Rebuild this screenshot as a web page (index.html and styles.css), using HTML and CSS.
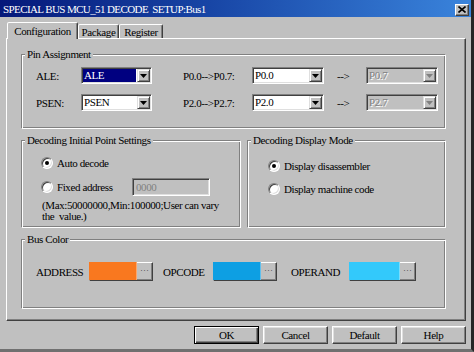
FILE: index.html
```html
<!DOCTYPE html>
<html>
<head>
<meta charset="utf-8">
<title>SPECIAL BUS MCU_51 DECODE SETUP:Bus1</title>
<link rel="stylesheet" href="styles.css">
</head>
<body>
<div class="window">
  <div class="titlebar">
    <span class="title">SPECIAL BUS MCU_51 DECODE&nbsp; SETUP:Bus1</span>
    <span class="close"><svg width="8" height="7" viewBox="0 0 8 7"><path d="M0.5 0.5 L7.5 6.5 M7.5 0.5 L0.5 6.5" stroke="#000" stroke-width="1.6" fill="none"/></svg></span>
  </div>

  <div class="tabs">
    <div class="tab active t-config">Configuration</div>
    <div class="tab t-package">Package</div>
    <div class="tab t-register">Register</div>
  </div>

  <div class="panel">
    <fieldset class="group pin">
      <legend>Pin Assignment</legend>
      <div class="pin-body">
        <span class="lbl">ALE:</span>
        <div class="combo"><span class="val sel">ALE</span><span class="drop"><svg width="7" height="4" viewBox="0 0 7 4"><polygon points="0,0 7,0 3.5,4" fill="#000"/></svg></span></div>
        <span></span>
        <span class="lbl">P0.0--&gt;P0.7:</span>
        <div class="combo"><span class="val">P0.0</span><span class="drop"><svg width="7" height="4" viewBox="0 0 7 4"><polygon points="0,0 7,0 3.5,4" fill="#000"/></svg></span></div>
        <span></span>
        <span class="lbl">--&gt;</span>
        <div class="combo disabled"><span class="val">P0.7</span><span class="drop"><svg width="7" height="4" viewBox="0 0 7 4"><polygon points="0,0 7,0 3.5,4" fill="#808080"/></svg></span></div>

        <span class="lbl">PSEN:</span>
        <div class="combo"><span class="val">PSEN</span><span class="drop"><svg width="7" height="4" viewBox="0 0 7 4"><polygon points="0,0 7,0 3.5,4" fill="#000"/></svg></span></div>
        <span></span>
        <span class="lbl">P2.0--&gt;P2.7:</span>
        <div class="combo"><span class="val">P2.0</span><span class="drop"><svg width="7" height="4" viewBox="0 0 7 4"><polygon points="0,0 7,0 3.5,4" fill="#000"/></svg></span></div>
        <span></span>
        <span class="lbl">--&gt;</span>
        <div class="combo disabled"><span class="val">P2.7</span><span class="drop"><svg width="7" height="4" viewBox="0 0 7 4"><polygon points="0,0 7,0 3.5,4" fill="#808080"/></svg></span></div>
      </div>
    </fieldset>

    <div class="row2">
      <fieldset class="group init">
        <legend>Decoding Initial Point Settings</legend>
        <div class="init-body">
          <div class="radio-row"><span class="radio on"></span><span>Auto decode</span></div>
          <div class="fixed-row">
            <div class="fixed-label"><span class="radio"></span><span>Fixed address</span></div>
            <div class="field">0000</div>
          </div>
          <div class="hint">(Max:50000000,Min:100000;User can vary<br>the&nbsp; value.)</div>
        </div>
      </fieldset>
      <fieldset class="group mode">
        <legend>Decoding Display Mode</legend>
        <div class="mode-body">
          <div class="radio-row"><span class="radio on"></span><span>Display disassembler</span></div>
          <div class="radio-row second"><span class="radio"></span><span>Display machine code</span></div>
        </div>
      </fieldset>
    </div>

    <fieldset class="group bus">
      <legend>Bus Color</legend>
      <div class="bus-body">
        <span class="blbl b-addr">ADDRESS</span>
        <div class="cbtn"><span class="swatch sw-orange"></span><span class="dots">···</span></div>
        <span class="blbl b-op">OPCODE</span>
        <div class="cbtn"><span class="swatch sw-blue"></span><span class="dots">···</span></div>
        <span class="blbl b-operand">OPERAND</span>
        <div class="cbtn wide"><span class="swatch sw-cyan"></span><span class="dots">···</span></div>
      </div>
    </fieldset>
  </div>

  <div class="buttons">
    <div class="btn default">OK</div>
    <div class="btn">Cancel</div>
    <div class="btn">Default</div>
    <div class="btn">Help</div>
  </div>
</div>
</body>
</html>
```

FILE: styles.css
```css
* { box-sizing: border-box; }
html, body { margin: 0; padding: 0; }
body {
  width: 474px;
  height: 352px;
  overflow: hidden;
  background: #6e6e6e;
  font-family: "Liberation Serif", "Times New Roman", serif;
  font-size: 11px;
  letter-spacing: -0.4px;
  color: #000;
}
.window {
  width: 474px;
  height: 352px;
  background: #c0c0c0;
  border-right: 3px solid #262626;
  border-bottom: 3px solid #707070;
  display: flex;
  flex-direction: column;
}
.titlebar {
  flex: none;
  height: 17px;
  display: flex;
  align-items: center;
  justify-content: space-between;
  padding: 0 2px 0 3px;
  background: linear-gradient(90deg, #05187a 0%, #1846a6 45%, #3a84dc 100%);
  color: #fff;
}
.title { letter-spacing: -0.6px; line-height: 12px; }
.close {
  width: 14px;
  height: 12px;
  margin-top: 2px;
  background: #c0c0c0;
  border: 1px solid;
  border-color: #fff #404040 #404040 #fff;
  box-shadow: inset -1px -1px #808080;
  display: flex;
  align-items: center;
  justify-content: center;
}

.tabs {
  flex: none;
  margin: 5px 0 0 7px;
  height: 16px;
  display: flex;
  align-items: flex-end;
}
.tab {
  height: 14px;
  background: #c0c0c0;
  border: 1px solid;
  border-bottom: none;
  border-color: #fff #404040 transparent #fff;
  box-shadow: inset -1px 0 #808080;
  border-radius: 2px 2px 0 0;
  display: flex;
  align-items: center;
  justify-content: center;
  line-height: 12px;
}
.tab.active {
  height: 17px;
  margin-bottom: -1px;
  position: relative;
  z-index: 1;
}
.t-config { width: 71px; }
.t-package { width: 41px; }
.t-register { width: 44px; }

.panel {
  flex: none;
  margin-left: 6px;
  width: 460px;
  height: 283px;
  border: 1px solid;
  border-color: #fff #404040 #404040 #fff;
  box-shadow: inset -1px -1px #808080;
  padding: 9px 0 0 14px;
}

.group {
  margin: 0;
  padding: 0;
  min-width: 0;
  border: 1px solid;
  border-color: #808080 #fff #fff #808080;
  box-shadow: inset 1px 1px #fff, inset -1px -1px #808080;
}
.group legend {
  margin-left: 3px;
  padding: 0 2px;
  height: 12px;
  line-height: 12px;
  background: #c0c0c0;
}

.pin { width: 425px; }
.pin-body {
  padding: 7px 0 17px 14px;
  display: grid;
  grid-template-columns: 45px 71px 31px 69px 72px 13px 29px 72px;
  grid-auto-rows: 17px;
  row-gap: 10px;
  align-items: center;
}
.lbl { line-height: 12px; }

.combo {
  height: 17px;
  border: 1px solid;
  border-color: #808080 #fff #fff #808080;
  box-shadow: inset 1px 1px #404040, inset -1px -1px #dfdfdf;
  background: #fff;
  padding: 1px;
  display: flex;
}
.combo .val {
  flex: 1;
  line-height: 13px;
  padding-left: 1px;
  white-space: nowrap;
}
.combo .val.sel {
  background: #000080;
  color: #fff;
  margin-right: 1px;
}
.combo .drop {
  flex: none;
  width: 13px;
  background: #c0c0c0;
  border: 1px solid;
  border-color: #dfdfdf #404040 #404040 #dfdfdf;
  box-shadow: inset 1px 1px #fff, inset -1px -1px #808080;
  display: flex;
  align-items: center;
  justify-content: center;
}
.combo.disabled { background: #c0c0c0; }
.combo.disabled .val { color: #808080; text-shadow: 1px 1px 0 #fff; }

.row2 {
  display: flex;
  gap: 6px;
  margin-top: 5px;
  width: 425px;
}
.init { width: 220px; }
.mode { width: 199px; }
.init-body { padding: 10px 0 5px 19px; }
.mode-body { padding: 13px 0 0 20px; }

.radio-row {
  display: flex;
  align-items: center;
  height: 13px;
  line-height: 12px;
}
.radio-row.second { margin-top: 10px; }
.radio {
  flex: none;
  width: 12px;
  height: 12px;
  margin-right: 4px;
  border-radius: 50%;
  background: #fff;
  border: 1px solid;
  border-color: #808080 #fff #fff #808080;
  box-shadow: inset 1px 1px #404040, inset -1px -1px #dfdfdf;
  display: flex;
  align-items: center;
  justify-content: center;
}
.radio.on::after {
  content: "";
  width: 4px;
  height: 4px;
  border-radius: 50%;
  background: #000;
}
.fixed-row {
  display: flex;
  align-items: center;
  height: 18px;
  margin-top: 9px;
}
.fixed-label {
  width: 91px;
  display: flex;
  align-items: center;
  line-height: 12px;
}
.field {
  width: 78px;
  height: 18px;
  border: 1px solid;
  border-color: #808080 #fff #fff #808080;
  box-shadow: inset 1px 1px #404040, inset -1px -1px #dfdfdf;
  background: #c0c0c0;
  color: #808080;
  padding: 2px 3px;
  line-height: 12px;
}
.hint {
  margin: 4px 0 0 1px;
  line-height: 11px;
  white-space: nowrap;
}

.bus { width: 425px; margin-top: 5px; }
.bus-body {
  padding: 17px 0 27px 14px;
  display: flex;
  align-items: center;
}
.blbl { line-height: 12px; }
.b-addr { width: 53px; }
.b-op { width: 50px; margin-left: 10px; }
.b-operand { width: 58px; margin-left: 14px; }
.cbtn {
  flex: none;
  width: 64px;
  height: 19px;
  display: flex;
  background: #c0c0c0;
  border: 1px solid;
  border-color: #fff #404040 #404040 #fff;
  box-shadow: inset -1px -1px #808080;
}
.cbtn.wide { width: 67px; }
.swatch {
  flex: none;
  width: 48px;
  margin: -1px 0 0 -1px;
  border-right: 1px solid rgba(255,255,255,0.35);
}
.cbtn.wide .swatch { width: 51px; }
.sw-orange { background: #f9781f; }
.sw-blue { background: #0d9fe3; }
.sw-cyan { background: #33c9fb; }
.dots {
  flex: 1;
  display: flex;
  align-items: flex-start;
  justify-content: center;
  font-size: 9px;
  line-height: 10px;
  letter-spacing: 0;
  color: #404040;
  padding-top: 2px;
}

.buttons {
  flex: none;
  display: flex;
  justify-content: flex-end;
  gap: 4px;
  margin-top: 5px;
  padding-right: 5px;
}
.btn {
  width: 65px;
  height: 18px;
  border: 1px solid;
  border-color: #fff #404040 #404040 #fff;
  box-shadow: inset -1px -1px #808080, inset 1px 1px #dfdfdf;
  display: flex;
  align-items: center;
  justify-content: center;
  line-height: 12px;
}
.btn.default {
  border-color: #000;
  box-shadow: inset 1px 1px #fff, inset -1px -1px #404040, inset -2px -2px #808080;
}
```
